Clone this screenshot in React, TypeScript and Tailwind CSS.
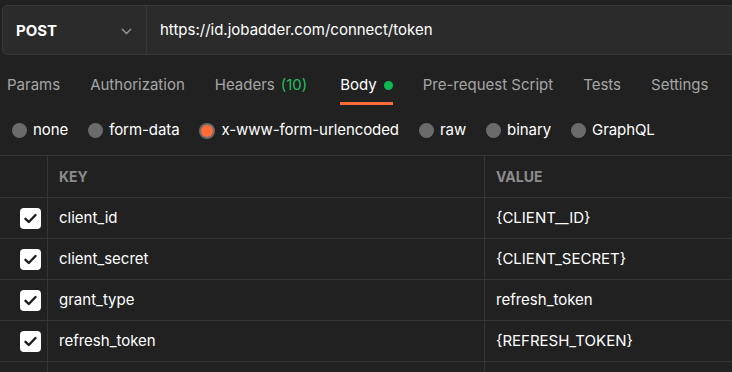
import React from "react";

const tabs = [
  { label: "Params" },
  { label: "Authorization" },
  { label: "Headers", count: "(10)" },
  { label: "Body", active: true },
  { label: "Pre-request Script" },
  { label: "Tests" },
  { label: "Settings" },
];

const radios = [
  { label: "none" },
  { label: "form-data" },
  { label: "x-www-form-urlencoded", active: true },
  { label: "raw" },
  { label: "binary" },
  { label: "GraphQL" },
];

const rows = [
  { k: "client_id", v: "{CLIENT__ID}" },
  { k: "client_secret", v: "{CLIENT_SECRET}" },
  { k: "grant_type", v: "refresh_token" },
  { k: "refresh_token", v: "{REFRESH_TOKEN}" },
];

function Check() {
  return (
    <div className="w-[21px] h-[21px] rounded-[4px] bg-white flex items-center justify-center">
      <svg width="13" height="11" viewBox="0 0 13 11" fill="none">
        <path d="M1.5 5.8 L4.8 9 L11.5 2" stroke="#1e1e1e" strokeWidth="2.4" strokeLinecap="round" strokeLinejoin="round" />
      </svg>
    </div>
  );
}

export default function App() {
  return (
    <div
      className="w-[732px] h-[372px] overflow-hidden bg-[#212121] text-[15px] text-white"
      style={{ fontFamily: "Inter, 'Noto Sans', sans-serif" }}
    >
      <div className="pt-[5px] pl-[2px]">
        <div className="flex h-[50px] w-[760px] rounded-[5px] border border-[#383838] bg-[#2b2b2b]">
          <div className="flex w-[144px] items-center justify-between border-r border-[#383838] pl-[13px] pr-[14px] pt-[2px]">
            <span className="font-bold text-[15px] text-white">POST</span>
            <svg width="11" height="7" viewBox="0 0 11 7" fill="none">
              <path d="M1 1 L5.5 5.5 L10 1" stroke="#9a9a9a" strokeWidth="1.3" />
            </svg>
          </div>
          <div className="flex items-center pl-[13px] pt-[1px] text-white">
            https://id.jobadder.com/connect/token
          </div>
        </div>
      </div>

      <div className="flex h-[51px] items-stretch gap-[30px] pl-[7px] pt-[9px]">
        {tabs.map((t) => (
          <div
            key={t.label}
            className={
              "relative flex items-center " + (t.label === "Body" ? "ml-[3px] " : "")
            }
          >
            <span className={t.active ? "text-white" : "text-[#a6a6a6]"}>{t.label}</span>
            {t.count && <span className="ml-[6px] text-[#1fbf5f]">{t.count}</span>}
            {t.active && <span className="ml-[7px] h-[9px] w-[9px] rounded-full bg-[#0cbb52]" />}
            {t.active && (
              <span className="absolute bottom-[1px] left-0 right-0 h-[3px] bg-[#ff6c37]" />
            )}
          </div>
        ))}
      </div>

      <div className="flex h-[49px] items-center gap-[20px] pl-[12px] tracking-[-0.08px]">
        {radios.map((r) => (
          <div key={r.label} className="flex items-center gap-[6px]">
            {r.active ? (
              <span className="flex h-[16px] w-[16px] items-center justify-center rounded-full bg-[#6b6b6b]">
                <span className="h-[12px] w-[12px] rounded-full bg-[#ff6c37]" />
              </span>
            ) : (
              <span className="h-[15px] w-[15px] rounded-full bg-[#6b6b6b]" />
            )}
            <span className="text-white">{r.label}</span>
          </div>
        ))}
      </div>

      <div className="border-t border-[#353535]">
        <div className="flex h-[42px] border-b border-[#353535]">
          <div className="w-[48px] border-r border-[#353535]" />
          <div className="flex w-[437px] items-center border-r border-[#353535] pl-[11px] text-[14px] font-bold text-[#8c8c8c]">
            KEY
          </div>
          <div className="flex flex-1 items-center pl-[11px] text-[14px] font-bold text-[#8c8c8c]">
            VALUE
          </div>
        </div>
        {rows.map((r) => (
          <div key={r.k} className="flex h-[41px] border-b border-[#353535]">
            <div className="flex w-[48px] items-center justify-end border-r border-[#353535] pr-[6px]">
              <Check />
            </div>
            <div className="flex w-[437px] items-center border-r border-[#353535] pl-[11px] text-white">
              {r.k}
            </div>
            <div className="flex flex-1 items-center pl-[11px] text-white">{r.v}</div>
          </div>
        ))}
        <div className="flex h-[41px]">
          <div className="w-[48px] border-r border-[#353535]" />
          <div className="w-[437px] border-r border-[#353535]" />
        </div>
      </div>
    </div>
  );
}
